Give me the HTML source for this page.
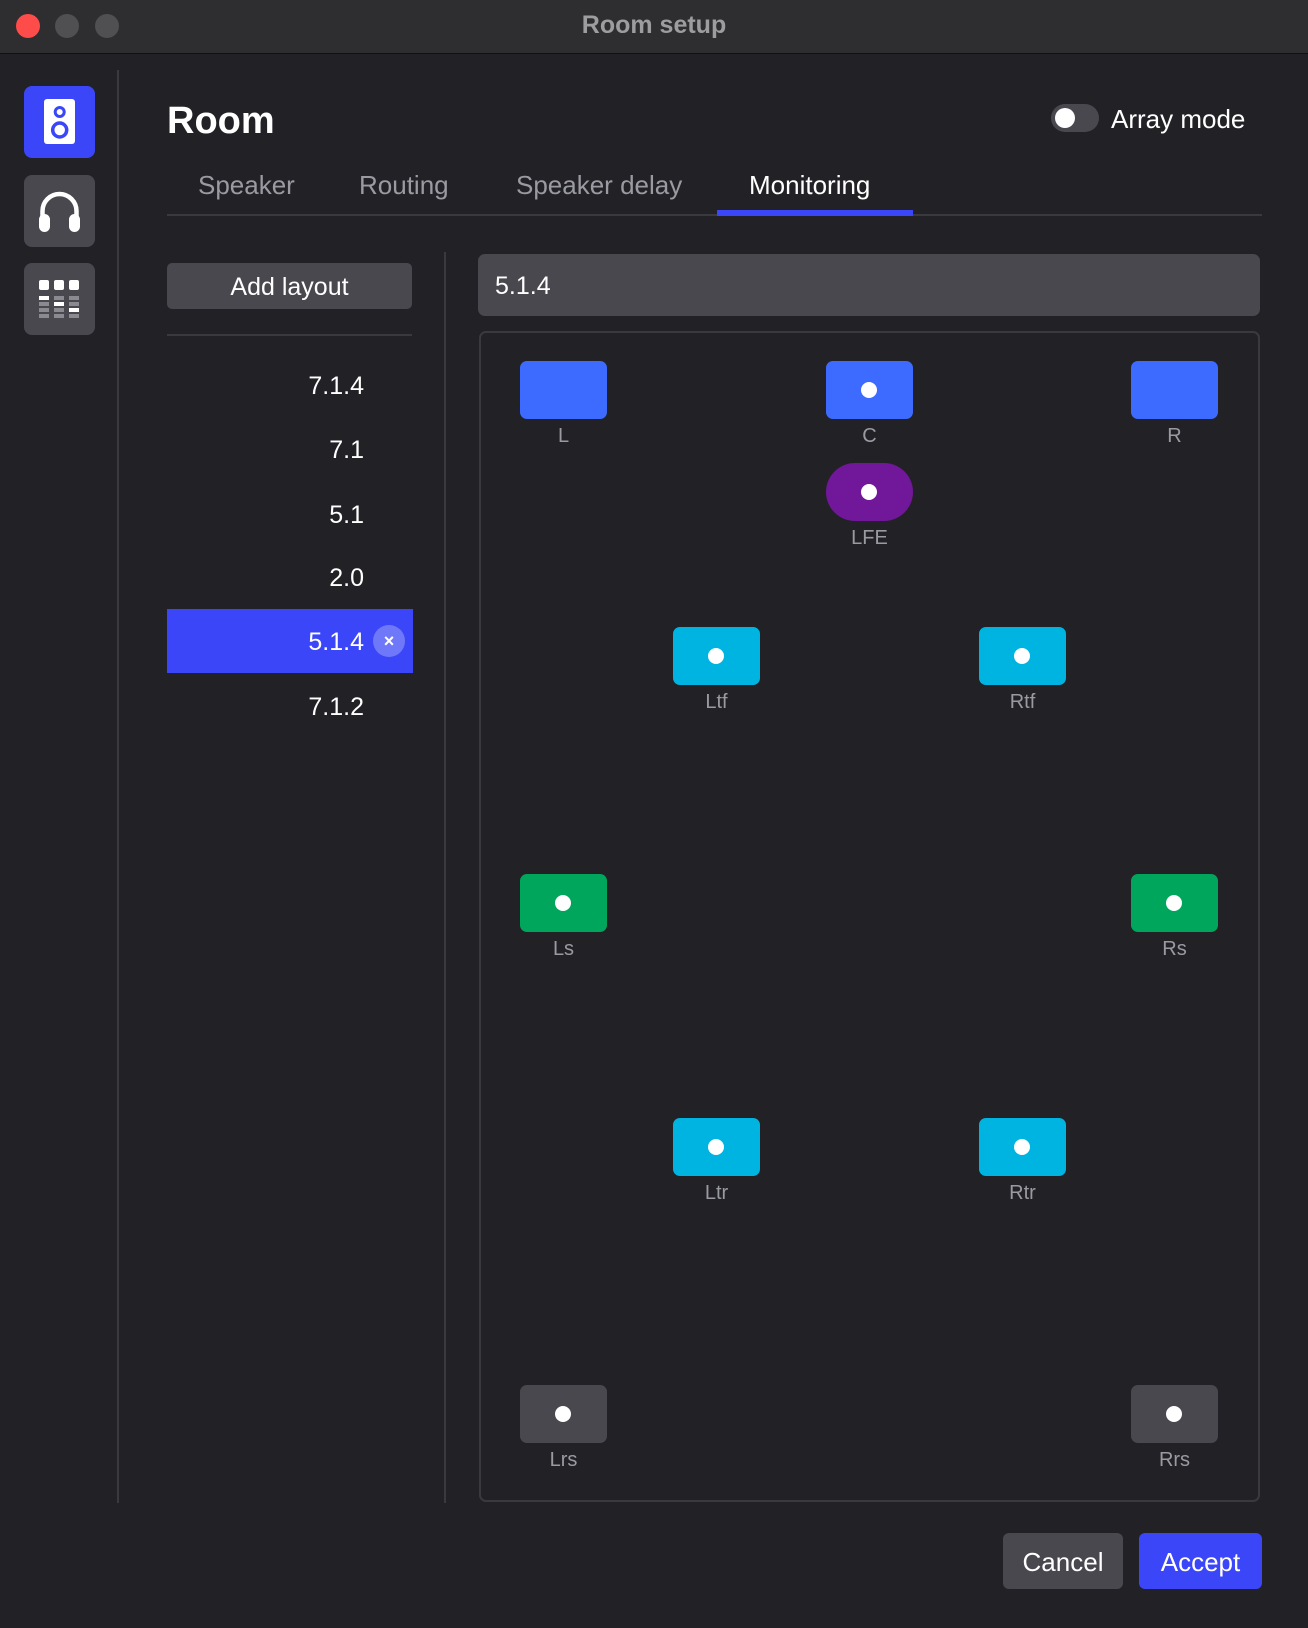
<!DOCTYPE html>
<html><head><meta charset="utf-8"><style>
*{margin:0;padding:0;box-sizing:border-box}
body{width:1308px;height:1628px;background:#222226;font-family:"Liberation Sans",sans-serif;position:relative;overflow:hidden;color:#fff}
.a{position:absolute}
.tb{left:0;top:0;width:1308px;height:54px;background:#2e2e30;border-bottom:1px solid #111}
.dot{width:24px;height:24px;border-radius:50%;top:14px}
.sb{left:24px;width:71px;height:72px;border-radius:8px;background:#48484e}
.tab{top:170px;font-size:26px;color:#9a9aa2}
.li{right:944px;font-size:25px;color:#fff;text-align:right}
.sp{width:87px;height:58px;border-radius:7px}
.sp i{position:absolute;left:35px;top:21px;width:16px;height:16px;border-radius:50%;background:#fff}
.lb{font-size:20px;color:#9a9aa2;width:87px;text-align:center}
</style></head><body>
<div class="a tb"></div>
<div class="a dot" style="left:16px;background:#fe4c4a"></div>
<div class="a dot" style="left:55px;background:#505052"></div>
<div class="a dot" style="left:95px;background:#505052"></div>
<div class="a" style="left:0;width:1308px;top:11px;text-align:center;font-size:25px;font-weight:bold;color:#9d9d9f">Room setup</div>

<div class="a sb" style="top:86px;background:#3b46f8"></div>
<svg class="a" style="left:24px;top:86px" width="71" height="72"><rect x="20" y="13" width="31" height="45" rx="3" fill="#fff"/><circle cx="35.7" cy="26" r="4.5" fill="none" stroke="#3b46f8" stroke-width="3"/><circle cx="35.7" cy="44" r="7" fill="none" stroke="#3b46f8" stroke-width="3.5"/></svg>
<div class="a sb" style="top:175px"></div>
<svg class="a" style="left:24px;top:175px" width="71" height="72"><path d="M18.5 48 V36 A17 17 0 0 1 52.5 36 V48" fill="none" stroke="#fff" stroke-width="4.5"/><rect x="15" y="39" width="11" height="18" rx="5.5" fill="#fff"/><rect x="45" y="39" width="11" height="18" rx="5.5" fill="#fff"/></svg>
<div class="a sb" style="top:263px"></div>
<svg class="a" style="left:24px;top:263px" width="71" height="72"><g fill="#fff"><rect x="15" y="17" width="10" height="10" rx="2"/><rect x="30" y="17" width="10" height="10" rx="2"/><rect x="45" y="17" width="10" height="10" rx="2"/></g>
<g fill="#8a8a90"><rect x="15" y="33" width="10" height="4"/><rect x="15" y="39" width="10" height="4"/><rect x="15" y="45" width="10" height="4"/><rect x="15" y="51" width="10" height="4"/><rect x="30" y="33" width="10" height="4"/><rect x="30" y="45" width="10" height="4"/><rect x="30" y="51" width="10" height="4"/><rect x="45" y="33" width="10" height="4"/><rect x="45" y="39" width="10" height="4"/><rect x="45" y="51" width="10" height="4"/></g>
<g fill="#fff"><rect x="15" y="33" width="10" height="4"/><rect x="30" y="39" width="10" height="4"/><rect x="45" y="45" width="10" height="4"/></g></svg>
<div class="a" style="left:117px;top:70px;width:2px;height:1433px;background:#3a3a3e"></div>

<div class="a" style="left:167px;top:100px;font-size:38px;font-weight:bold">Room</div>
<div class="a" style="left:1051px;top:104px;width:48px;height:28px;border-radius:14px;background:#48484e"></div>
<div class="a" style="left:1055px;top:108px;width:20px;height:20px;border-radius:50%;background:#fff"></div>
<div class="a" style="left:1111px;top:104px;font-size:26px">Array mode</div>

<div class="a tab" style="left:198px">Speaker</div>
<div class="a tab" style="left:359px">Routing</div>
<div class="a tab" style="left:516px">Speaker delay</div>
<div class="a tab" style="left:749px;color:#fff">Monitoring</div>
<div class="a" style="left:167px;top:214px;width:1095px;height:2px;background:#3a3a3e"></div>
<div class="a" style="left:717px;top:210px;width:196px;height:6px;background:#3b46f8"></div>

<div class="a" style="left:167px;top:263px;width:245px;height:46px;border-radius:5px;background:#48484e;font-size:25px;text-align:center;line-height:48px">Add layout</div>
<div class="a" style="left:167px;top:334px;width:245px;height:2px;background:#3a3a3e"></div>
<div class="a li" style="top:372px">7.1.4</div>
<div class="a li" style="top:436px">7.1</div>
<div class="a li" style="top:501px">5.1</div>
<div class="a li" style="top:564px">2.0</div>
<div class="a" style="left:167px;top:609px;width:246px;height:64px;background:#3b46f8"></div>
<div class="a li" style="top:628px">5.1.4</div>
<div class="a" style="left:373px;top:625px;width:32px;height:32px;border-radius:50%;background:#7078fa;text-align:center;line-height:32px;font-size:18px;font-weight:bold">×</div>
<div class="a li" style="top:693px">7.1.2</div>
<div class="a" style="left:444px;top:252px;width:2px;height:1251px;background:#3a3a3e"></div>

<div class="a" style="left:478px;top:254px;width:782px;height:62px;border-radius:7px;background:#48484e;font-size:25px;line-height:64px;padding-left:17px">5.1.4</div>
<div class="a" style="left:479px;top:331px;width:781px;height:1171px;border:2px solid #3a3a3e;border-radius:7px"></div>

<div class="a sp" style="left:520px;top:361px;background:#3d6bff"></div>
<div class="a sp" style="left:826px;top:361px;background:#3d6bff"><i></i></div>
<div class="a sp" style="left:1131px;top:361px;background:#3d6bff"></div>
<div class="a sp" style="left:826px;top:463px;background:#71179a;border-radius:29px"><i></i></div>
<div class="a sp" style="left:673px;top:627px;background:#00b4e2"><i></i></div>
<div class="a sp" style="left:979px;top:627px;background:#00b4e2"><i></i></div>
<div class="a sp" style="left:520px;top:874px;background:#00a65b"><i></i></div>
<div class="a sp" style="left:1131px;top:874px;background:#00a65b"><i></i></div>
<div class="a sp" style="left:673px;top:1118px;background:#00b4e2"><i></i></div>
<div class="a sp" style="left:979px;top:1118px;background:#00b4e2"><i></i></div>
<div class="a sp" style="left:520px;top:1385px;background:#48484e"><i></i></div>
<div class="a sp" style="left:1131px;top:1385px;background:#48484e"><i></i></div>

<div class="a lb" style="left:520px;top:425px">L</div>
<div class="a lb" style="left:826px;top:425px">C</div>
<div class="a lb" style="left:1131px;top:425px">R</div>
<div class="a lb" style="left:826px;top:527px">LFE</div>
<div class="a lb" style="left:673px;top:691px">Ltf</div>
<div class="a lb" style="left:979px;top:691px">Rtf</div>
<div class="a lb" style="left:520px;top:938px">Ls</div>
<div class="a lb" style="left:1131px;top:938px">Rs</div>
<div class="a lb" style="left:673px;top:1182px">Ltr</div>
<div class="a lb" style="left:979px;top:1182px">Rtr</div>
<div class="a lb" style="left:520px;top:1449px">Lrs</div>
<div class="a lb" style="left:1131px;top:1449px">Rrs</div>

<div class="a" style="left:1003px;top:1533px;width:120px;height:56px;border-radius:6px;background:#48484e;font-size:26px;text-align:center;line-height:58px">Cancel</div>
<div class="a" style="left:1139px;top:1533px;width:123px;height:56px;border-radius:6px;background:#3b46f8;font-size:26px;text-align:center;line-height:58px">Accept</div>
</body></html>
